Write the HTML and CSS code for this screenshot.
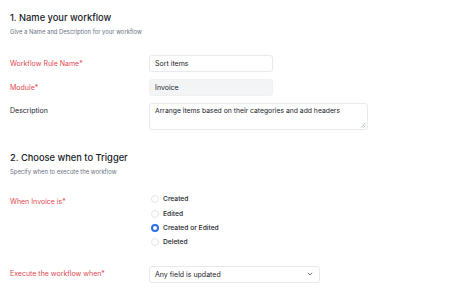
FILE: index.html
```html
<!DOCTYPE html>
<html>
<head>
<meta charset="utf-8">
<link rel="stylesheet" href="styles.css">
</head>
<body>
<div class="page">
  <h2 class="title">1. Name your workflow</h2>
  <p class="sub">Give a Name and Description for your workflow</p>
  <div class="rows">
    <div class="row">
      <label class="label req">Workflow Rule Name*</label>
      <div class="field input">Sort items</div>
    </div>
    <div class="row">
      <label class="label req">Module*</label>
      <div class="field input disabled">Invoice</div>
    </div>
    <div class="row top">
      <label class="label desc">Description</label>
      <div class="field textarea">Arrange items based on their categories and add headers
        <svg class="grip" width="6" height="6" viewBox="0 0 6 6"><path d="M1 5.5L5.5 1M3.5 5.5L5.5 3.5" stroke="#9ca3af" stroke-width="0.7" fill="none"/></svg>
      </div>
    </div>
  </div>

  <h2 class="title t2">2. Choose when to Trigger</h2>
  <p class="sub">Specify when to execute the workflow</p>
  <div class="row top radiorow">
    <label class="label req inv">When Invoice is*</label>
    <div class="radios">
      <div class="radio"><span class="dot"></span>Created</div>
      <div class="radio"><span class="dot"></span>Edited</div>
      <div class="radio"><span class="dot on"></span>Created or Edited</div>
      <div class="radio"><span class="dot"></span>Deleted</div>
    </div>
  </div>
  <div class="row exec">
    <label class="label req">Execute the workflow when*</label>
    <div class="field select">Any field is updated
      <svg class="chev" width="6" height="4" viewBox="0 0 6 4"><path d="M0.8 0.8L3 3L5.2 0.8" stroke="#4b5563" stroke-width="0.8" fill="none"/></svg>
    </div>
  </div>
</div>
</body>
</html>
```
FILE: styles.css
```css
* { box-sizing: border-box; }
html, body { margin: 0; padding: 0; background: #ffffff; }
body {
  font-family: Inter, "Noto Sans", "Liberation Sans", sans-serif;
  color: #21263c;
  width: 474px;
  height: 296px;
  overflow: hidden;
}
.page { padding: 10px 10px 0 10px; }
.title {
  margin: 0;
  font-size: 9.3px;
  line-height: 16px;
  font-weight: 500;
  color: #1a1d29;
}
.t2 { margin-top: 20px; }
.sub {
  margin: 1px 0 0 0;
  font-size: 5.9px;
  line-height: 10px;
  color: #6b7280;
}
.rows {
  margin-top: 18px;
  display: flex;
  flex-direction: column;
  gap: 7px;
}
.row { display: flex; align-items: center; }
.row.top { align-items: flex-start; }
.label {
  width: 139px;
  flex: none;
  font-size: 7px;
  line-height: 12px;
  color: #1a1d29;
}
.label.req { color: #e0484f; }
.label.desc { padding-top: 2px; }
.field {
  border: 1px solid #e8e9ec;
  border-radius: 3px;
  background: #fff;
  font-size: 7px;
  color: #1a1d29;
  padding: 0 5px;
}
.input { width: 124px; height: 17px; line-height: 15px; }
.disabled { background: #f3f4f6; border-color: #f0f1f3; }
.textarea {
  width: 219px;
  height: 27px;
  font-size: 6.8px;
  line-height: 12px;
  padding-top: 1px;
  position: relative;
}
.grip { position: absolute; right: 1px; bottom: 1px; }
.radiorow { margin-top: 15px; }
.inv { padding-top: 4px; }
.radios { display: flex; flex-direction: column; }
.radio {
  display: flex;
  align-items: center;
  height: 14.4px;
  font-size: 6.7px;
  font-weight: 500;
  color: #1a1d29;
}
.dot {
  width: 8px;
  height: 8px;
  border-radius: 50%;
  border: 1px solid #e4e6ea;
  background: #fff;
  margin: 0 4px 0 2px;
}
.dot.on {
  border: 2.2px solid #2f6fe4;
}
.exec { margin-top: 16px; }
.select {
  width: 171px;
  height: 17px;
  line-height: 15px;
  display: flex;
  justify-content: space-between;
  align-items: center;
}
.chev { margin-right: 1px; }
```
